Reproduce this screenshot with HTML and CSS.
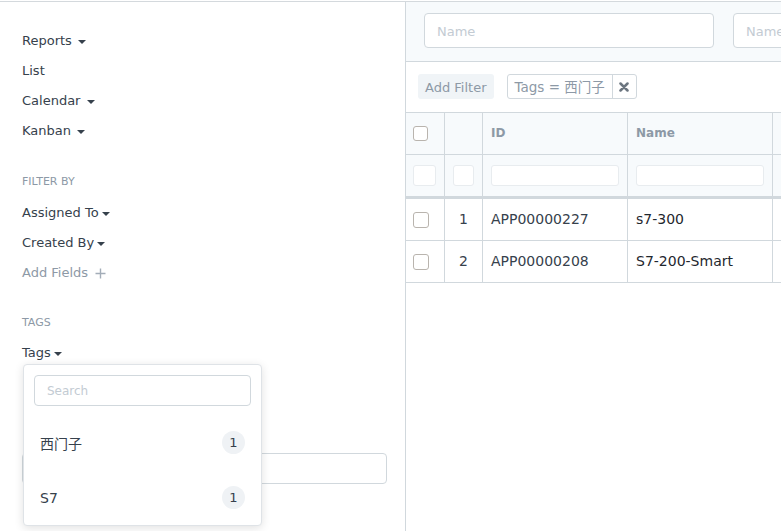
FILE: index.html
```html
<!DOCTYPE html>
<html lang="en">
<head>
<meta charset="utf-8">
<title>List</title>
<link rel="stylesheet" href="styles.css">
</head>
<body>
<div class="layout">
  <aside class="sidebar">
    <ul class="nav">
      <li class="nav-item">Reports <span class="caret"></span></li>
      <li class="nav-item">List</li>
      <li class="nav-item">Calendar <span class="caret"></span></li>
      <li class="nav-item">Kanban <span class="caret"></span></li>
    </ul>
    <div class="section-label label-filter">Filter By</div>
    <ul class="nav nav-filter">
      <li class="nav-item">Assigned To<span class="caret tight"></span></li>
      <li class="nav-item">Created By<span class="caret tight"></span></li>
      <li class="nav-item muted">Add Fields <svg class="plus" width="11" height="11" viewBox="0 0 11 11"><path d="M5.5 0.5v10M0.5 5.5h10" stroke="currentColor" stroke-width="1.4" fill="none"/></svg></li>
    </ul>
    <div class="section-label label-tags">Tags</div>
    <div class="tags-group">
      <div class="nav-item">Tags<span class="caret tight"></span></div>
      <div class="dropdown">
        <input class="dd-search" type="text" placeholder="Search">
        <ul class="dd-list">
          <li class="dd-item"><span>西门子</span><span class="badge">1</span></li>
          <li class="dd-item"><span>S7</span><span class="badge">1</span></li>
        </ul>
      </div>
    </div>
    <input class="side-input" type="text">
  </aside>
  <main class="main">
    <div class="std-filters">
      <input class="std-input" type="text" placeholder="Name">
      <input class="std-input" type="text" placeholder="Name">
    </div>
    <div class="filter-bar">
      <button class="add-filter">Add Filter</button>
      <div class="chip">
        <span class="chip-label">Tags = 西门子</span>
        <span class="chip-remove"><svg width="10" height="10" viewBox="0 0 10 10"><path d="M1.5 1.5l7 7M8.5 1.5l-7 7" stroke="#6c7680" stroke-width="2.5" stroke-linecap="round" fill="none"/></svg></span>
      </div>
    </div>
    <div class="grid">
      <div class="row head">
        <div class="cell c1"><span class="check"></span></div>
        <div class="cell c2"></div>
        <div class="cell c3 th">ID</div>
        <div class="cell c4 th">Name</div>
        <div class="cell c5"></div>
      </div>
      <div class="row filters">
        <div class="cell c1"><input class="cell-input" type="text"></div>
        <div class="cell c2"><input class="cell-input" type="text"></div>
        <div class="cell c3"><input class="cell-input" type="text"></div>
        <div class="cell c4"><input class="cell-input" type="text"></div>
        <div class="cell c5"></div>
      </div>
      <div class="row body-row">
        <div class="cell c1"><span class="check row-check"></span></div>
        <div class="cell c2 num">1</div>
        <div class="cell c3 id">APP00000227</div>
        <div class="cell c4 name">s7-300</div>
        <div class="cell c5"></div>
      </div>
      <div class="row body-row">
        <div class="cell c1"><span class="check row-check"></span></div>
        <div class="cell c2 num">2</div>
        <div class="cell c3 id">APP00000208</div>
        <div class="cell c4 name">S7-200-Smart</div>
        <div class="cell c5"></div>
      </div>
    </div>
  </main>
</div>
</body>
</html>
```

FILE: styles.css
```css
* { box-sizing: border-box; }

html, body {
  margin: 0;
  padding: 0;
  height: 100%;
  overflow: hidden;
  background: #fff;
}

body {
  padding-top: 1px;
  font-family: "DejaVu Sans", "Noto Sans CJK SC", sans-serif;
  font-size: 13px;
  color: #36414c;
}

.layout {
  display: flex;
  height: 530px;
  border-top: 1px solid #d4d9dd;
}

/* ---------- sidebar ---------- */
.sidebar {
  width: 405px;
  flex-shrink: 0;
  padding: 24px 0 0 22px;
}

.nav {
  list-style: none;
  margin: 0;
  padding: 0;
}

.nav-item {
  height: 30px;
  line-height: 30px;
  white-space: nowrap;
  color: #36414c;
}

.nav-item.muted {
  color: #8d99a6;
  display: flex;
  align-items: center;
}

.plus {
  margin-left: 7px;
  color: #a3adb8;
}

.caret {
  display: inline-block;
  width: 0;
  height: 0;
  margin-left: 2px;
  vertical-align: middle;
  border-top: 4px solid #36414c;
  border-left: 4px solid transparent;
  border-right: 4px solid transparent;
}

.caret.tight { margin-left: 3px; }

.section-label {
  font-size: 11px;
  line-height: 20px;
  text-transform: uppercase;
  color: #8d99a6;
}

.label-filter { margin-top: 26px; }
.nav-filter { margin-top: 6px; }
.label-tags { margin-top: 25px; }

.tags-group {
  position: relative;
  margin-top: 5px;
}

.dropdown {
  position: absolute;
  z-index: 10;
  top: calc(100% - 4px);
  left: 1px;
  width: 239px;
  padding: 10px 10px 0;
  background: #fff;
  border: 1px solid #dfe3e7;
  border-radius: 4px;
  box-shadow: 0 2px 10px rgba(0, 0, 0, 0.12);
}

.dd-search {
  display: block;
  width: 100%;
  height: 31px;
  padding: 0 12px;
  border: 1px solid #d1d8dd;
  border-radius: 4px;
  font-family: inherit;
  font-size: 12px;
  color: #36414c;
  outline: none;
}

.dd-search::placeholder { color: #c3cbd3; }

.dd-list {
  list-style: none;
  margin: 9px 0 0;
  padding: 0;
}

.dd-item {
  height: 55px;
  display: flex;
  align-items: center;
  justify-content: space-between;
  padding: 0 6px 0 6px;
  font-size: 14px;
  color: #36414c;
}

.badge {
  width: 23px;
  height: 23px;
  border-radius: 50%;
  background: #eff2f5;
  display: flex;
  align-items: center;
  justify-content: center;
  font-size: 13px;
  color: #36414c;
}

.side-input {
  display: block;
  width: 365px;
  height: 31px;
  margin-top: 85px;
  border: 1px solid #d1d8dd;
  border-radius: 4px;
  background: #fff;
}

/* ---------- main ---------- */
.main {
  flex: 1;
  min-width: 0;
  border-left: 1px solid #d1d8dd;
  overflow: hidden;
}

.std-filters {
  display: flex;
  gap: 19px;
  padding: 11px 18px 13px;
  background: #f7fafc;
  border-bottom: 1px solid #d1d8dd;
}

.std-input {
  flex-shrink: 0;
  width: 290px;
  height: 35px;
  padding: 2px 12px 0;
  border: 1px solid #d1d8dd;
  border-radius: 4px;
  background: #fff;
  font-family: inherit;
  font-size: 13px;
  outline: none;
}

.std-input::placeholder { color: #c3cbd3; }

.filter-bar {
  display: flex;
  align-items: center;
  gap: 13px;
  padding: 12px 12px 13px;
}

.add-filter {
  height: 25px;
  padding: 2px 7px 0;
  border: none;
  border-radius: 3px;
  background: #f0f4f7;
  font-family: inherit;
  font-size: 13px;
  color: #8d99a6;
}

.chip {
  display: flex;
  height: 25px;
  border: 1px solid #d1d8dd;
  border-radius: 3px;
  color: #8d99a6;
}

.chip-label {
  padding: 1px 7px 0 7px;
  line-height: 22px;
  white-space: nowrap;
  font-size: 13.5px;
}

.chip-remove {
  width: 24px;
  border-left: 1px solid #d1d8dd;
  display: flex;
  align-items: center;
  justify-content: center;
}

/* ---------- grid ---------- */
.grid {
  margin-left: -1px;
  width: max-content;
  border-top: 1px solid #d1d8dd;
  border-left: 1px solid #d1d8dd;
}

.row {
  display: flex;
  height: 42px;
  border-bottom: 1px solid #d1d8dd;
}

.row.head { background: #f7fafc; }

.row.filters {
  height: 44px;
  background: #f7fafc;
  border-bottom: 3px solid #d1d8dd;
}

.row.body-row { font-size: 14px; }

.cell {
  display: flex;
  align-items: center;
  border-right: 1px solid #d1d8dd;
  padding: 0 8px;
  white-space: nowrap;
}

.c1 { width: 39px; padding: 0 8px 0 7px; }
.c2 { width: 38px; }
.c3 { width: 145px; }
.c4 { width: 145px; }
.c5 { width: 145px; }

.th {
  font-size: 12px;
  font-weight: bold;
  color: #8d99a6;
  padding-bottom: 2px;
}

.num {
  justify-content: center;
  padding: 0;
  color: #36414c;
}

.id { color: #36414c; }
.name { color: #1f272e; }

.body-row .cell { padding-bottom: 2px; }
.body-row .c1 { padding-bottom: 0; }

.check {
  display: block;
  width: 15px;
  height: 15px;
  border: 1px solid #b9b4ae;
  border-radius: 3px;
  background: #fff;
}

.row-check {
  width: 16px;
  height: 16px;
}

.cell-input {
  display: block;
  width: 100%;
  height: 21px;
  border: 1px solid #e8ecef;
  border-radius: 3px;
  background: #fff;
  outline: none;
}
```
